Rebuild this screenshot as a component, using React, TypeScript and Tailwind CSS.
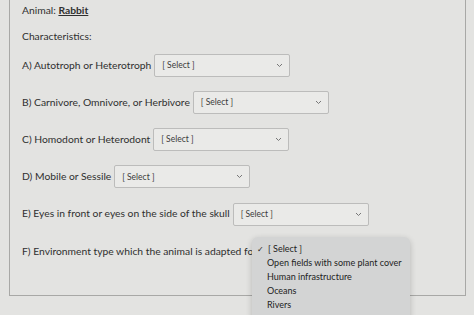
import React from 'react';

const ROWS = [
  'A) Autotroph or Heterotroph',
  'B) Carnivore, Omnivore, or Herbivore',
  'C) Homodont or Heterodont',
  'D) Mobile or Sessile',
  'E) Eyes in front or eyes on the side of the skull',
];

const OPTIONS = ['Open fields with some plant cover', 'Human infrastructure', 'Oceans', 'Rivers'];

const SelectBox: React.FC = () => (
  <div className="flex h-[23px] w-[136px] shrink-0 items-center justify-between rounded-[2px] border border-[#bcbcbb] bg-[#eaeae8] pl-[7px] pr-[6px]">
    <span className="text-[8.5px] text-[#3a3a3a]">[ Select ]</span>
    <svg width="7" height="5" viewBox="0 0 7 5" className="text-[#777]">
      <path d="M1 1l2.5 2.5L6 1" fill="none" stroke="currentColor" strokeWidth="1" />
    </svg>
  </div>
);

export default function App() {
  return (
    <div
      className="relative h-[315px] w-[474px] overflow-hidden bg-[#e3e3e1] text-[#2f2f2f]"
      style={{ fontFamily: 'Lato, "Open Sans", sans-serif' }}
    >
      <div className="ml-[9px] h-[296px] w-[457px] border border-t-0 border-[#a8a8a6]">
        <div className="pl-[12px] pt-[3px] text-[10.3px]">
          <div>
            Animal: <span className="font-bold underline">Rabbit</span>
          </div>
          <div className="mt-[11px]">Characteristics:</div>

          <div className="mt-[9px] flex flex-col gap-[14.2px]">
            {ROWS.map((label) => (
              <div key={label} className="flex items-center gap-[3px]">
                <span className="whitespace-nowrap">{label}</span>
                <SelectBox />
              </div>
            ))}
            <div className="mt-[4px] flex items-center gap-[3px]">
              <span className="whitespace-nowrap">F) Environment type which the animal is adapted for</span>
            </div>
          </div>
        </div>
      </div>

      {/* open dropdown menu */}
      <div className="absolute left-[252px] top-[237px] w-[158px] rounded-[6px] bg-[#d3d4d4] pb-[10px] pt-[5px] text-[9px] text-[#222] shadow-[0_2px_6px_rgba(0,0,0,0.2)]">
        <div className="flex h-[14px] items-center pl-[5px]">
          <span className="w-[11px] shrink-0 text-[8px] leading-none">✓</span>
          <span>[ Select ]</span>
        </div>
        {OPTIONS.map((o) => (
          <div key={o} className="flex h-[14px] items-center whitespace-nowrap pl-[15px]">
            {o}
          </div>
        ))}
      </div>
    </div>
  );
}
